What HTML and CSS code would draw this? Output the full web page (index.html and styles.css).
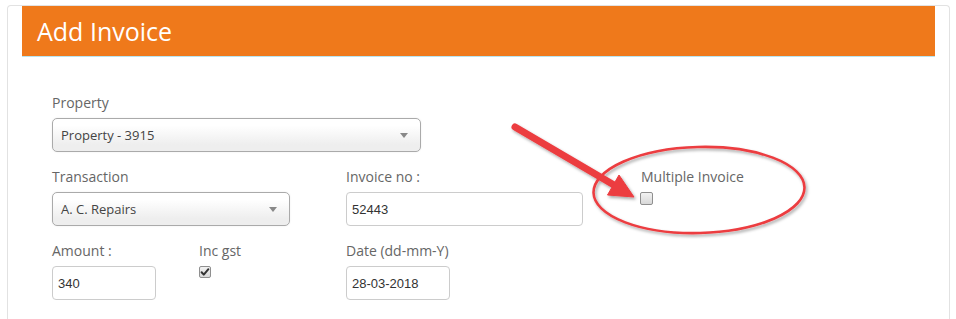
FILE: index.html
```html
<!DOCTYPE html>
<html>
<head>
<meta charset="utf-8">
<link rel="stylesheet" href="styles.css">
</head>
<body>
<div class="card">
  <div class="card-header">Add Invoice</div>
  <div class="form">
    <div class="group">
      <div class="label">Property</div>
      <div class="select select-wide"><span>Property - 3915</span><i class="caret"></i></div>
    </div>
    <div class="row">
      <div class="group span2">
        <div class="label">Transaction</div>
        <div class="select select-mid"><span>A. C. Repairs</span><i class="caret"></i></div>
      </div>
      <div class="group">
        <div class="label">Invoice no :</div>
        <div class="input input-mid">52443</div>
      </div>
      <div class="group">
        <div class="label">Multiple Invoice</div>
        <span class="check check-multi"></span>
      </div>
    </div>
    <div class="row">
      <div class="group">
        <div class="label">Amount :</div>
        <div class="input input-small">340</div>
      </div>
      <div class="group">
        <div class="label">Inc gst</div>
        <span class="check check-on"><svg viewBox="0 0 12 12" width="12" height="12"><path d="M2.6 6.2 L4.8 8.6 L9.4 3.2" fill="none" stroke="#333" stroke-width="2" stroke-linecap="round" stroke-linejoin="round"/></svg></span>
      </div>
      <div class="group">
        <div class="label">Date (dd-mm-Y)</div>
        <div class="input input-small">28-03-2018</div>
      </div>
    </div>
  </div>
</div>
<svg class="annotation" width="956" height="319" viewBox="0 0 956 319">
  <defs>
    <filter id="sh" x="-20%" y="-20%" width="140%" height="140%">
      <feDropShadow dx="1.5" dy="2" stdDeviation="1.6" flood-color="#000" flood-opacity="0.35"/>
    </filter>
  </defs>
  <g filter="url(#sh)">
    <ellipse cx="699" cy="190" rx="105.5" ry="43" fill="none" stroke="#ec3c40" stroke-width="2.6" transform="rotate(-1.5 699 190)"/>
    <line x1="515" y1="127" x2="614" y2="185" stroke="#ec3c40" stroke-width="7" stroke-linecap="round"/>
    <polygon points="634,197 619,175 607.5,195" fill="#ec3c40" stroke="#ec3c40" stroke-width="1" stroke-linejoin="round"/>
  </g>
</svg>
</body>
</html>
```

FILE: styles.css
```css
html, body {
  margin: 0;
  padding: 0;
  background: #fff;
  overflow: hidden;
}
body {
  position: relative;
  width: 956px;
  height: 319px;
  font-family: "Open Sans", "Liberation Sans", sans-serif;
}
.card {
  margin: 5px 0 0 7px;
  width: 943px;
  height: 314px;
  border: 1px solid #e2e2e2;
  border-bottom: none;
  border-radius: 4px 4px 0 0;
  padding: 0 14px;
  box-sizing: border-box;
}
.card-header {
  height: 50px;
  background: #ef791b;
  border-bottom: 1px solid #b9e4ef;
  color: #fff;
  font-size: 25px;
  line-height: 50px;
  padding-left: 15px;
}
.form {
  padding: 36px 0 0 30px;
}
.group {
  margin-bottom: 15px;
}
.row {
  display: grid;
  grid-template-columns: 147px 147px 295px auto;
}
.span2 {
  grid-column: span 2;
}
.label {
  font-size: 14px;
  line-height: 20px;
  color: #666;
  margin-bottom: 5px;
}
.select {
  box-sizing: border-box;
  height: 34px;
  border: 1px solid #aaa;
  border-radius: 5px;
  background: linear-gradient(#fff 20%, #eee 80%);
  box-shadow: 0 0 2px rgba(0,0,0,0.08);
  display: flex;
  align-items: center;
  justify-content: space-between;
  padding: 0 12px 0 8px;
  font-size: 13px;
  color: #444;
}
.select-wide { width: 369px; }
.select-mid { width: 238px; }
.caret {
  width: 0;
  height: 0;
  border-left: 4px solid transparent;
  border-right: 4px solid transparent;
  border-top: 5px solid #888;
  margin-top: 1px;
}
.input {
  box-sizing: border-box;
  height: 34px;
  border: 1px solid #ccc;
  border-radius: 4px;
  padding: 0 5px;
  display: flex;
  align-items: center;
  font-family: "Liberation Sans", Arial, sans-serif;
  font-size: 13px;
  color: #333;
}
.input-mid { width: 237px; }
.input-small { width: 104px; }
.check {
  display: block;
  box-sizing: border-box;
  width: 12px;
  height: 12px;
  border: 1px solid #8f8f8f;
  border-radius: 2px;
  background: linear-gradient(#f2f2f2, #d8d8d8);
}
.check svg { display: block; margin: -1px 0 0 -1px; }
.check-multi { margin: 4px 0 0 -1px; width: 13px; height: 13px; }
.check-on { margin-top: 5px; }
.annotation {
  position: absolute;
  left: 0;
  top: 0;
  pointer-events: none;
}
```
